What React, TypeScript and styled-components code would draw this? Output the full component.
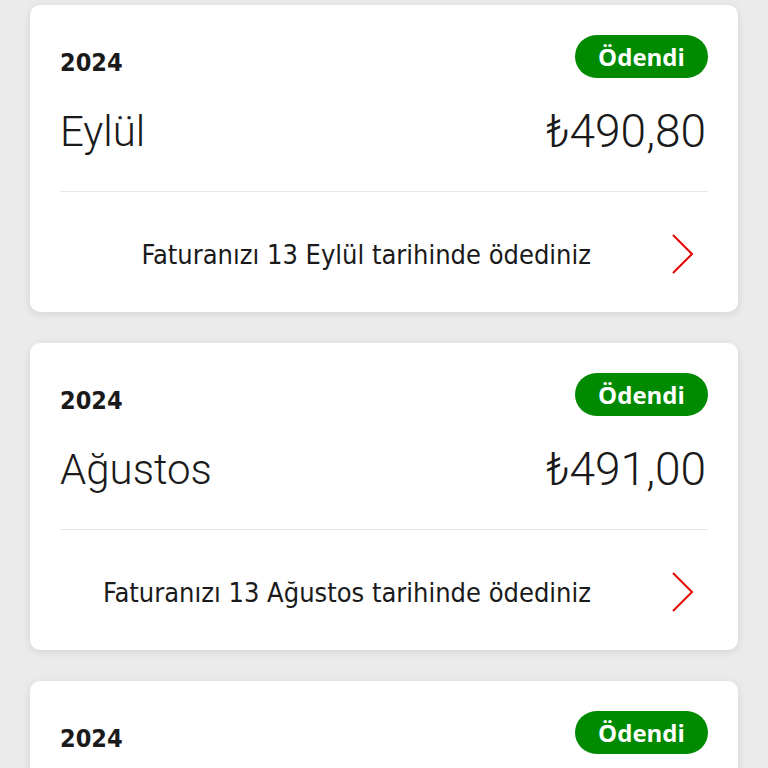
import styled, { createGlobalStyle } from "styled-components";

const GlobalStyle = createGlobalStyle`
  html, body {
    margin: 0;
    padding: 0;
    background: #ebebeb;
  }
  body {
    font-family: "DejaVu Sans Condensed", "Liberation Sans", sans-serif;
    color: #1a1a1a;
  }
`;

const Screen = styled.div`
  height: 768px;
  overflow: hidden;
`;

const List = styled.div`
  display: flex;
  flex-direction: column;
  gap: 31px;
  padding: 5px 30px 40px;
`;

const Card = styled.div`
  background: #ffffff;
  border-radius: 10px;
  box-shadow: 0 2px 8px rgba(0, 0, 0, 0.1);
  padding: 30px 30px 0;
`;

const Header = styled.div`
  display: flex;
  justify-content: space-between;
  align-items: center;
  height: 43px;
`;

const Year = styled.span`
  font-weight: 700;
  font-size: 25px;
  margin-top: 12px;
`;

const Badge = styled.span`
  display: inline-flex;
  align-items: center;
  justify-content: center;
  height: 43px;
  width: 133px;
  border-radius: 22px;
  background: #008a00;
  color: #ffffff;
  font-family: "Open Sans", sans-serif;
  font-weight: 700;
  font-size: 24px;
`;

const Summary = styled.div`
  display: flex;
  justify-content: space-between;
  align-items: center;
  height: 66px;
  margin-top: 20px;
  padding-bottom: 27px;
  border-bottom: 1px solid #e6e6e6;
  font-family: "Roboto", sans-serif;
  font-weight: 300;
`;

const Month = styled.span`
  font-size: 42px;
`;

const Amount = styled.span`
  font-size: 46px;
  padding-right: 2px;
`;

const Footer = styled.div`
  box-sizing: border-box;
  display: flex;
  justify-content: flex-end;
  align-items: center;
  height: 120px;
  padding: 4px 14px 0 0;
  gap: 80px;
`;

const Note = styled.span`
  font-size: 27px;
`;

const Chevron = () => (
  <svg width="23" height="42" viewBox="0 0 23 42" fill="none">
    <path d="M2 2 L21 21 L2 40" stroke="#e60000" strokeWidth="2" />
  </svg>
);

const bills = [
  { year: 2024, month: "Eylül", amount: "₺490,80", note: "Faturanızı 13 Eylül tarihinde ödediniz" },
  { year: 2024, month: "Ağustos", amount: "₺491,00", note: "Faturanızı 13 Ağustos tarihinde ödediniz" },
  { year: 2024, month: "Temmuz", amount: "₺489,50", note: "Faturanızı 13 Temmuz tarihinde ödediniz" },
];

export default function App() {
  return (
    <Screen>
      <GlobalStyle />
      <List>
        {bills.map((b) => (
          <Card key={b.month}>
            <Header>
              <Year>{b.year}</Year>
              <Badge>Ödendi</Badge>
            </Header>
            <Summary>
              <Month>{b.month}</Month>
              <Amount>{b.amount}</Amount>
            </Summary>
            <Footer>
              <Note>{b.note}</Note>
              <Chevron />
            </Footer>
          </Card>
        ))}
      </List>
    </Screen>
  );
}
